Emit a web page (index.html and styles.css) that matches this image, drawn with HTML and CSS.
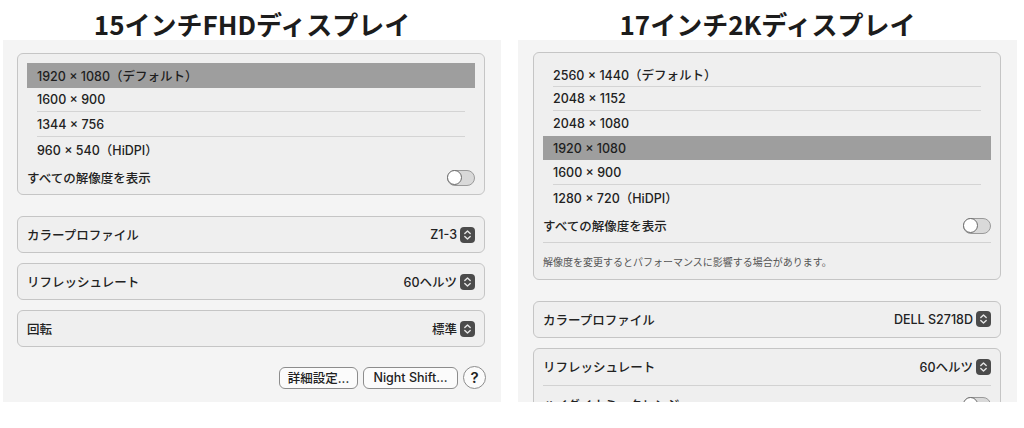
FILE: index.html
```html
<!DOCTYPE html>
<html lang="ja">
<head>
<meta charset="utf-8">
<title>ディスプレイ比較</title>
<link rel="stylesheet" href="styles.css">
</head>
<body>
<div class="page">
  <section class="col col-left">
    <h1 class="title">15インチFHDディスプレイ</h1>
    <div class="panel panel-left">
      <div class="group res">
        <ul class="res-list">
          <li class="sel">1920 × 1080（デフォルト）</li>
          <li class="sep">1600 × 900</li>
          <li class="sep">1344 × 756</li>
          <li>960 × 540（HiDPI）</li>
        </ul>
        <div class="toggle-row">
          <span>すべての解像度を表示</span>
          <span class="switch"><span class="knob"></span></span>
        </div>
      </div>
      <div class="selects">
        <div class="group select">
          <span>カラープロファイル</span>
          <span class="value">Z1-3<svg class="stepper" viewBox="0 0 15 16" width="15" height="16"><rect width="15" height="16" rx="4" fill="#4b4b4b"/><polyline points="4.8,6.6 7.5,4 10.2,6.6" fill="none" stroke="#e6e6e6" stroke-width="1.4" stroke-linecap="round" stroke-linejoin="round"/><polyline points="4.8,9.4 7.5,12 10.2,9.4" fill="none" stroke="#e6e6e6" stroke-width="1.4" stroke-linecap="round" stroke-linejoin="round"/></svg></span>
        </div>
        <div class="group select">
          <span>リフレッシュレート</span>
          <span class="value">60ヘルツ<svg class="stepper" viewBox="0 0 15 16" width="15" height="16"><rect width="15" height="16" rx="4" fill="#4b4b4b"/><polyline points="4.8,6.6 7.5,4 10.2,6.6" fill="none" stroke="#e6e6e6" stroke-width="1.4" stroke-linecap="round" stroke-linejoin="round"/><polyline points="4.8,9.4 7.5,12 10.2,9.4" fill="none" stroke="#e6e6e6" stroke-width="1.4" stroke-linecap="round" stroke-linejoin="round"/></svg></span>
        </div>
        <div class="group select">
          <span>回転</span>
          <span class="value">標準<svg class="stepper" viewBox="0 0 15 16" width="15" height="16"><rect width="15" height="16" rx="4" fill="#4b4b4b"/><polyline points="4.8,6.6 7.5,4 10.2,6.6" fill="none" stroke="#e6e6e6" stroke-width="1.4" stroke-linecap="round" stroke-linejoin="round"/><polyline points="4.8,9.4 7.5,12 10.2,9.4" fill="none" stroke="#e6e6e6" stroke-width="1.4" stroke-linecap="round" stroke-linejoin="round"/></svg></span>
        </div>
      </div>
      <div class="buttons">
        <button class="btn btn-adv">詳細設定...</button>
        <button class="btn btn-night">Night Shift...</button>
        <button class="btn help">?</button>
      </div>
    </div>
  </section>

  <section class="col col-right">
    <h1 class="title">17インチ2Kディスプレイ</h1>
    <div class="panel panel-right">
      <div class="group res">
        <ul class="res-list">
          <li class="sep">2560 × 1440（デフォルト）</li>
          <li class="sep">2048 × 1152</li>
          <li>2048 × 1080</li>
          <li class="sel">1920 × 1080</li>
          <li class="sep">1600 × 900</li>
          <li>1280 × 720（HiDPI）</li>
        </ul>
        <div class="toggle-row divided">
          <span>すべての解像度を表示</span>
          <span class="switch"><span class="knob"></span></span>
        </div>
        <p class="note">解像度を変更するとパフォーマンスに影響する場合があります。</p>
      </div>
      <div class="selects">
        <div class="group select">
          <span>カラープロファイル</span>
          <span class="value">DELL S2718D<svg class="stepper" viewBox="0 0 15 16" width="15" height="16"><rect width="15" height="16" rx="4" fill="#4b4b4b"/><polyline points="4.8,6.6 7.5,4 10.2,6.6" fill="none" stroke="#e6e6e6" stroke-width="1.4" stroke-linecap="round" stroke-linejoin="round"/><polyline points="4.8,9.4 7.5,12 10.2,9.4" fill="none" stroke="#e6e6e6" stroke-width="1.4" stroke-linecap="round" stroke-linejoin="round"/></svg></span>
        </div>
        <div class="group multi">
          <div class="select inner divided">
            <span>リフレッシュレート</span>
            <span class="value">60ヘルツ<svg class="stepper" viewBox="0 0 15 16" width="15" height="16"><rect width="15" height="16" rx="4" fill="#4b4b4b"/><polyline points="4.8,6.6 7.5,4 10.2,6.6" fill="none" stroke="#e6e6e6" stroke-width="1.4" stroke-linecap="round" stroke-linejoin="round"/><polyline points="4.8,9.4 7.5,12 10.2,9.4" fill="none" stroke="#e6e6e6" stroke-width="1.4" stroke-linecap="round" stroke-linejoin="round"/></svg></span>
          </div>
          <div class="toggle-row hdr">
            <span>ハイダイナミックレンジ</span>
            <span class="switch"><span class="knob"></span></span>
          </div>
        </div>
      </div>
    </div>
  </section>
</div>
</body>
</html>
```

FILE: styles.css
```css
* { box-sizing: border-box; }

html, body {
  margin: 0;
  padding: 0;
  background: #ffffff;
}

body {
  width: 1024px;
  height: 428px;
  overflow: hidden;
  font-family: "Inter", "Noto Sans CJK JP", sans-serif;
  font-size: 12.5px;
  font-weight: 500;
  color: #222222;
}

.page {
  display: flex;
  gap: 17px;
  padding-left: 3px;
}

.col {
  display: flex;
  flex-direction: column;
}

.col-left { width: 498px; }
.col-right { width: 499px; }

.title {
  margin: 0;
  height: 40px;
  padding-top: 8px;
  line-height: 32px;
  text-align: center;
  font-family: "Noto Sans CJK JP", sans-serif;
  font-size: 26px;
  font-weight: 700;
  color: #1c1c1c;
  letter-spacing: 0;
}

.panel {
  height: 362px;
  background: #f4f4f4;
  overflow: hidden;
  display: flex;
  flex-direction: column;
}

.panel-left { padding: 13px 16px 0 14px; }
.panel-right { padding: 12px 16px 0 15px; }

.group {
  border: 1px solid #c5c5c5;
  border-radius: 6px;
  background: #efefef;
}

.res {
  padding: 9px 9px 0;
}

.res-list {
  list-style: none;
  margin: 0;
  padding: 0;
}

.res-list li {
  height: 24.6px;
  display: flex;
  align-items: center;
  padding-left: 10px;
}

.res-list li.sep {
  background-image: linear-gradient(#d4d4d4, #d4d4d4);
  background-size: calc(100% - 20px) 1px;
  background-position: center bottom;
  background-repeat: no-repeat;
}

.res-list li.sel {
  background: #9e9e9e;
  color: #1e1e1e;
}

.toggle-row {
  height: 33px;
  display: flex;
  align-items: center;
  justify-content: space-between;
}

.toggle-row.divided {
  border-bottom: 1px solid #d2d2d2;
  height: 33.4px;
}

.switch {
  width: 28px;
  height: 16px;
  border-radius: 8px;
  border: 1px solid #9a9a9a;
  background: #d9d9d9;
  display: flex;
  align-items: center;
}

.knob {
  width: 15px;
  height: 15px;
  margin-left: -1px;
  border-radius: 50%;
  background: #ffffff;
  border: 1.5px solid #6a6a6a;
}

.note {
  margin: 0;
  height: 36px;
  padding-top: 12px;
  line-height: 14px;
  font-size: 10px;
  font-weight: 400;
  color: #555555;
}

.selects {
  display: flex;
  flex-direction: column;
  gap: 10px;
  margin-top: 21px;
}

.select {
  height: 37px;
  display: flex;
  align-items: center;
  justify-content: space-between;
  padding: 0 9px 0 9px;
}

.value {
  display: flex;
  align-items: center;
  gap: 3px;
}

.stepper {
  display: block;
}

.multi {
  display: flex;
  flex-direction: column;
  padding: 0 9px;
}

.select.inner {
  padding: 0;
  height: 37px;
}

.select.inner.divided {
  border-bottom: 1px solid #d2d2d2;
}

.toggle-row.hdr {
  height: 38px;
}

.buttons {
  display: flex;
  justify-content: flex-end;
  align-items: center;
  gap: 5px;
  margin-top: 19px;
  margin-right: -1px;
}

.btn {
  height: 22px;
  border: 1px solid #8c8c8c;
  border-radius: 6px;
  background: #fbfbfb;
  font-family: "Inter", "Noto Sans CJK JP", sans-serif;
  font-size: 12.5px;
  font-weight: 500;
  color: #222222;
  padding: 0;
  display: flex;
  align-items: center;
  justify-content: center;
}

.btn-adv { width: 79px; }
.btn-night { width: 95px; }

.help {
  width: 23px;
  height: 23px;
  border-radius: 50%;
  font-size: 15px;
  font-weight: 600;
}
```
